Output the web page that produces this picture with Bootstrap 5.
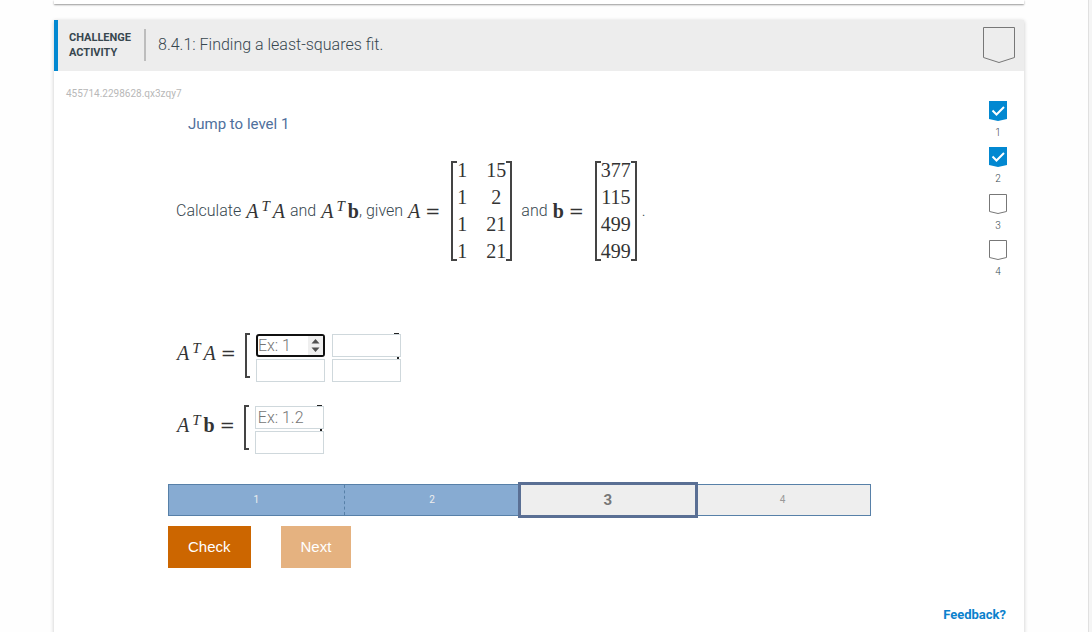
<!DOCTYPE html>
<html lang="en">
<head>
<meta charset="utf-8">
<meta name="viewport" content="width=device-width, initial-scale=1">
<title>8.4.1: Finding a least-squares fit</title>
<link href="https://cdn.jsdelivr.net/npm/bootstrap@5.3.0/dist/css/bootstrap.min.css" rel="stylesheet">
<style>
body { font-family: Roboto, "Liberation Sans", sans-serif; font-size: 16px; font-weight: 300; line-height: 20px; color: #37474f; background: #f5f5f5; }
.page { min-height: 100vh; margin-right: 3px; padding: 0 64px 0 54px; background: #fefefe; border-right: 1px solid #e0e0e0; }
.panel { background: #fff; box-shadow: 0 1px 4px rgba(0,0,0,.22); }
.panel-prev { height: 4px; margin-bottom: 16px; box-shadow: 0 1px 2px rgba(0,0,0,.4); }
.panel-head { height: 51px; background: #ededed; border-left: 4px solid #0288d1; padding: 0 9px 2px 11px; }
.kind { width: 75px; font-size: 11px; line-height: 15px; font-weight: 700; }
.rule { width: 2px; height: 32px; background: #bdbdbd; margin-right: 12px; }
.act-id { font-size: 10px; line-height: 14px; font-weight: 400; color: #b8b8b8; padding: 16px 12px 0; }
.side { width: 18px; margin: 0 17px 0 0; font-size: 10px; line-height: 14px; }
.side-item { height: 46px; }
.side-item svg { margin-bottom: 5px; }
.work { max-width: 703px; margin: 13px 0 0 114px; }
.jump { font-size: 15px; font-weight: 400; color: #4f709c; margin-left: 20px; }
.math { font-family: "Liberation Serif", serif; font-size: 20px; line-height: 20px; font-weight: 400; color: #333; white-space: nowrap; }
.math sup { font-size: 15px; top: -7px; line-height: 0; margin: 0 3px; }
.eq { font-family: "DejaVu Serif", serif; font-size: 18px; line-height: 16px; margin-left: 5px; }
.prompt { height: 101px; margin: 26px 0 72px 8px; gap: 5px; }
.prompt .after { margin-left: -5px; }
.brk { position: relative; padding: 0 6px; margin-left: 6px; }
.brk::before, .brk::after { content: ""; position: absolute; top: 0; bottom: 0; width: 6px; border: 2px solid #444; }
.brk::before { left: 0; border-right: 0; }
.brk::after { right: 0; border-left: 0; }
.brk table { line-height: 27px; text-align: center; margin: -4px 0; }
.brk td { padding: 0; }
.brk td + td { padding-left: 19px; }
.answer { height: 47px; margin: 0 0 25px 9px; }
.answer .lhs { margin-top: 10px; }
.open { width: 5px; height: 45px; border: 2px solid #444; border-right: 0; margin-left: 9px; margin-right: 6px; }
.cells { position: relative; z-index: 0; display: grid; gap: 2px 7px; margin-top: 1px; }
.cells::after { content: ""; position: absolute; z-index: -1; top: -1px; right: 2px; width: 5px; height: 45px; border: 2px solid #222; border-left: 0; }
.two { grid-template-columns: 69px 69px; }
.one { grid-template-columns: 69px; }
.cell { width: 69px; height: 23px; padding: 0 0 0 2px; border: 1px solid #cfd8dc; border-radius: 0; background: #fff; font-size: 16px; font-weight: 300; line-height: 20px; appearance: textfield; display: block; }
.cell::placeholder { color: #757575; }
.cell::-webkit-inner-spin-button { display: none; }
.cell-active { border: 2px solid #101010; border-radius: 3px; padding-left: 0; }
.spin { position: absolute; top: 2px; right: 2px; }
.levels { height: 32px; margin-top: 32px; margin-bottom: 10px; border: 1px solid #5780a8; font-size: 10px; font-weight: 400; line-height: 30px; text-align: center; background: #eee; color: #999; }
.level { flex: 1 1 0; }
.done { background: #87abd2; color: #eee; }
.done + .done { border-left: 1px dashed #5780a8; }
.current { margin-left: 1px; outline: 3px solid #5a6f94; font-size: 15px; font-weight: 700; color: #777; }
.actions { gap: 30px; }
.act-btn { height: 42px; padding: 0 20px; border: 0; border-radius: 0; font-family: "Liberation Sans", sans-serif; font-size: 15px; line-height: 20px; font-weight: 400; color: #fff; background: #cc6600; }
.act-btn:disabled { background: #e5b280; color: #fff; opacity: 1; border: 0; }
.feedback { font-size: 13px; font-weight: 700; color: #0b81cd; padding: 37px 18px 17px; }
</style>
</head>
<body>
<main class="page d-flex flex-column">
  <div class="panel panel-prev"></div>
  <section class="panel flex-grow-1">
    <header class="panel-head d-flex align-items-center">
      <div class="kind">CHALLENGE ACTIVITY</div>
      <div class="rule"></div>
      <h1 class="fs-6 fw-light mb-0 flex-grow-1">8.4.1: Finding a least-squares fit.</h1>
      <svg width="32" height="37" viewBox="0 0 32 37" fill="none" stroke="#777"><path d="M.5 1.500h31v30L16 36.500.5 31.500z"/></svg>
    </header>
    <div class="act-id">455714.2298628.qx3zqy7</div>
    <div class="d-flex justify-content-between align-items-start">
      <div class="work flex-grow-1">
        <a class="jump text-decoration-none" href="#level1">Jump to level 1</a>
        <div class="prompt d-flex align-items-center">
          <span>Calculate</span>
          <span class="math"><i>A</i><sup><i>T</i></sup><i>A</i></span>
          <span>and</span>
          <span class="math"><i>A</i><sup><i>T</i></sup><b>b</b></span>
          <span class="after">, given</span>
          <span class="math"><i>A</i><span class="eq">=</span></span>
          <div class="brk math me-1"><table><tr><td>1</td><td>15</td></tr><tr><td>1</td><td>2</td></tr><tr><td>1</td><td>21</td></tr><tr><td>1</td><td>21</td></tr></table></div>
          <span>and</span>
          <span class="math"><b>b</b><span class="eq">=</span></span>
          <div class="brk math"><table><tr><td>377</td></tr><tr><td>115</td></tr><tr><td>499</td></tr><tr><td>499</td></tr></table></div>
          <span>.</span>
        </div>
        <div class="answer d-flex align-items-start">
          <span class="math lhs"><i>A</i><sup><i>T</i></sup><i>A</i><span class="eq">=</span></span>
          <span class="open"></span>
          <div class="cells two">
            <div class="position-relative">
              <input class="cell cell-active" type="number" placeholder="Ex: 1" aria-label="Row 1 column 1">
              <svg class="spin" width="15" height="19" viewBox="0 0 15 19"><path fill="#efefef" d="M0 0h15v19H0z"/><path fill="#505050" d="M7.500 3l4 4.500h-8zM7.500 16l4-4.500h-8z"/></svg>
            </div>
            <input class="cell" type="number" aria-label="Row 1 column 2">
            <input class="cell" type="number" aria-label="Row 2 column 1">
            <input class="cell" type="number" aria-label="Row 2 column 2">
          </div>
        </div>
        <div class="answer d-flex align-items-start">
          <span class="math lhs"><i>A</i><sup><i>T</i></sup><b>b</b><span class="eq">=</span></span>
          <span class="open"></span>
          <div class="cells one">
            <input class="cell" type="number" placeholder="Ex: 1.2" aria-label="Row 1">
            <input class="cell" type="number" aria-label="Row 2">
          </div>
        </div>
        <div class="levels d-flex">
          <div class="level done">1</div>
          <div class="level done">2</div>
          <div class="level current">3</div>
          <div class="level">4</div>
        </div>
        <div class="actions d-flex">
          <button class="act-btn btn" type="button">Check</button>
          <button class="act-btn btn" type="button" disabled>Next</button>
        </div>
      </div>
      <div class="side text-center">
        <div class="side-item"><svg class="d-block" width="18" height="20" viewBox="0 0 18 20"><path fill="#0288d1" d="M0 0h18v18l-9 2-9-2z"/><path fill="none" stroke="#fff" stroke-width="2" d="M3.500 9.500l4 4L15 6"/></svg>1</div>
        <div class="side-item"><svg class="d-block" width="18" height="20" viewBox="0 0 18 20"><path fill="#0288d1" d="M0 0h18v18l-9 2-9-2z"/><path fill="none" stroke="#fff" stroke-width="2" d="M3.500 9.500l4 4L15 6"/></svg>2</div>
        <div class="side-item"><svg class="d-block" width="18" height="21" viewBox="0 0 18 21"><path fill="none" stroke="#777" d="M.5 1.500h17v17L9 20.500.5 18.500z"/></svg>3</div>
        <div class="side-item"><svg class="d-block" width="18" height="21" viewBox="0 0 18 21"><path fill="none" stroke="#777" d="M.5 1.500h17v17L9 20.500.5 18.500z"/></svg>4</div>
      </div>
    </div>
    <div class="feedback text-end"><a class="text-reset text-decoration-none" href="#feedback">Feedback?</a></div>
  </section>
</main>
<script src="https://cdn.jsdelivr.net/npm/bootstrap@5.3.0/dist/js/bootstrap.bundle.min.js"></script>
</body>
</html>
